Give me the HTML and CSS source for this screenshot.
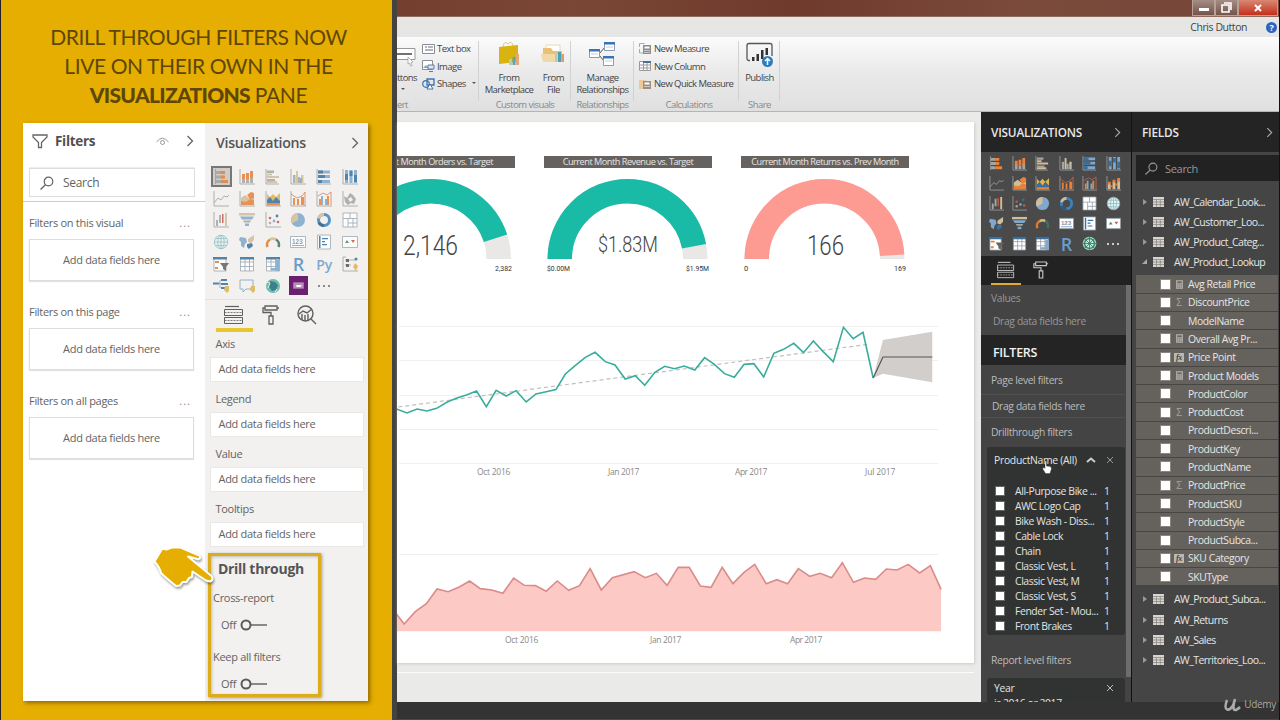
FILE: index.html
```html
<!DOCTYPE html>
<html>
	<head>
		<meta charset="UTF-8">
		<title>Drill through filters</title>
		<link rel="stylesheet" href="styles.css">
	</head>
	<body>
		<!-- icons -->
		<svg class="defs" width="0" height="0">
			<symbol id="i-barh" viewBox="0 0 16 16"><path class="ax" d="M1.5 0v15"/><path class="g" d="M2 2h5v3H2zM2 6.500h8v3H2zM2 11h5v3H2z"/><path class="o" d="M6 2h5v3H6zM7 6.500h4v3H7zM7 11h7v3H7z"/></symbol>
			<symbol id="i-barv" viewBox="0 0 16 16"><path class="ax" d="M1 0v15h15"/><path class="g" d="M3 9h3v5H3zM7 10h3v4H7zM11 8h3v6h-3z"/><path class="o" d="M3 5h3v5H3zM7 4h3v6H7zM11 2h3v7h-3z"/></symbol>
			<symbol id="i-clh" viewBox="0 0 16 16"><path class="ax" d="M1 0v15h13"/><path class="g" d="M2 1.500h7v2.500H2zM2 10h8v2H2z"/><path class="t" d="M2 4.500h5v2H2zM2 7h12v2H2zM2 12h10v2H2z"/></symbol>
			<symbol id="i-clv" viewBox="0 0 16 16"><path class="ax" d="M1 0v15h15"/><path class="g" d="M3 6h2.500v8H3zM8 8h2v6H8z"/><path class="t" d="M6 2h2v12H6zM11 6h2.500v8H11z"/><path class="b" d="M10 9h2v5h-2z"/></symbol>
			<symbol id="i-fh" viewBox="0 0 16 16"><path class="ax" d="M1 0v15h14"/><path class="b" d="M2 1.500h12v3H2zM2 6h12v3H2zM2 11h12v3H2z"/><path class="n" d="M2 1.500h5v3H2zM2 6h7v3H2zM2 11h4v3H2z"/></symbol>
			<symbol id="i-fv" viewBox="0 0 16 16"><path class="ax" d="M1 0v15h15"/><path class="b" d="M3 1h3v13H3zM7.500 1h3v13h-3zM12 1h3v13h-3z"/><path class="n" d="M3 5h3v6H3zM7.500 2h3v5h-3zM12 6h3v7h-3z"/></symbol>
			<symbol id="i-line" viewBox="0 0 16 16"><path class="ax" d="M1 0v15h15M1 12l4-5 3 2 3-4 3 1 2-2"/></symbol>
			<symbol id="i-area" viewBox="0 0 16 16"><path class="ax" d="M1 0v15h15"/><path class="t" d="M2 7l4-3 4 3 5-3v10H2z"/><path class="o" d="M2 10l5 1 4-3 4 1v5H2zM8 4l4-3 3 1v5l-4 1z"/></symbol>
			<symbol id="i-stack" viewBox="0 0 16 16"><path class="ax" d="M1 0v15h15"/><path class="y" d="M2 3l3 3 3-3 3 3 4-4v10H2z"/><path class="n" d="M2 9l3-3 3 4 3-4 4 4v3H2z"/><path class="o" d="M2 12h13v2.500H2z"/></symbol>
			<symbol id="i-lc" viewBox="0 0 16 16"><path class="ax" d="M1 0v15h15"/><path class="o" d="M3 7h2v7H3zM7 8h2v6H7zM11 6h3v8h-3z"/><path class="lr" d="M1 3l6 4 5-2 3-4v14"/></symbol>
			<symbol id="i-lc2" viewBox="0 0 16 16"><path class="ax" d="M1 0v15h15"/><path class="o" d="M3 8h2v6H3zM11 5h2v9h-2z"/><path class="b" d="M5 5h2v9H5zM9 8h2v6H9z"/><path class="lr" d="M2 5l5-3 4 2 4-3v13"/></symbol>
			<symbol id="i-rib" viewBox="0 0 16 16"><path class="ax" d="M1 0v15h15"/><path class="g" d="M2 5l3 2 3-5 3 2 3 4-2 5-3-1-3 2-3-3z"/><path class="bg" d="M6 8l3-2 2 3-3 2z"/></symbol>
			<symbol id="i-cols" viewBox="0 0 16 16"><path class="ax" d="M1 0v15h15"/><path class="t" d="M2 8h3v6H2zM7 6h3v8H7zM12 4h3v10h-3z"/><path class="o" d="M2 6h3v3H2zM7 4h3v3H7zM12 2h3v4h-3zM5 10h2v2H5zM10 8h2v2h-2z"/></symbol>
			<symbol id="i-wf" viewBox="0 0 16 16"><path class="ax" d="M1 0v15h15"/><path class="g" d="M3 8h2v6H3zM6 3h2v8H6z"/><path class="r" d="M9 2h1.500v9H9z"/><path class="t" d="M12 1h2v13h-2z"/></symbol>
			<symbol id="i-fun" viewBox="0 0 16 16"><path class="t" d="M0 1h16v2.500H0z"/><path class="b" d="M1 4.500h14l-2 3H3z"/><path class="g" d="M4 8.500h8l-1 2H5z"/><path class="b" d="M6 11.500h4V14H6z"/></symbol>
			<symbol id="i-sc" viewBox="0 0 16 16"><path class="ax" d="M1 0v15h15"/><circle class="r" cx="5" cy="6" r="1.300"/><circle class="b" cx="9" cy="9" r="1.400"/><circle class="n" cx="12" cy="4" r="1.400"/><circle class="r" cx="13" cy="10" r="1.300"/><circle class="g" cx="5" cy="11" r="1.300"/></symbol>
			<symbol id="i-pie" viewBox="0 0 16 16"><circle class="b" cx="8" cy="8" r="7"/><path class="t" d="M8 8V1a7 7 0 0 0-6 10.500z"/></symbol>
			<symbol id="i-don" viewBox="0 0 16 16"><circle cx="8" cy="8" r="5.500" fill="none" stroke="#3b83bd" stroke-width="3"/><path d="M8 2.500a5.500 5.500 0 0 0-5.300 4" fill="none" stroke="#d3bd93" stroke-width="3"/><path d="M3 10.500A5.500 5.500 0 0 0 8 13.500" fill="none" stroke="#255b86" stroke-width="3"/></symbol>
			<symbol id="i-tree" viewBox="0 0 16 16"><path class="box" d="M1 1h14v14H1zM1 6.500h14M8 1v5.500M6 6.500V15M11 6.500V15M6 11h9"/></symbol>
			<symbol id="i-glb" viewBox="0 0 16 16"><circle class="gl" cx="8" cy="8" r="6.700"/><path class="gll" d="M1.500 8h13M8 1.500v13M2.500 4.500h11M2.500 11.500h11"/><ellipse class="gll" cx="8" cy="8" rx="3.200" ry="6.700"/></symbol>
			<symbol id="i-map" viewBox="0 0 16 16"><path class="b" d="M1 3l6 1 1 4-2 2-1 4-3-2V8L0 6z"/><path class="t" d="M9 5l6-4v5l-3 3-3-1z"/><path class="n" d="M8 10l5-1 1 3-4 3-2-2z"/></symbol>
			<symbol id="i-gau" viewBox="0 0 16 16"><path d="M2.500 13A6 6 0 0 1 5 5.500" stroke="#e07b2c" stroke-width="2.600" fill="none"/><path d="M5 5.500a6 6 0 0 1 6 0" stroke="#d8bd82" stroke-width="2.600" fill="none"/><path d="M11 5.500a6 6 0 0 1 2.500 7.500" stroke="#41725f" stroke-width="2.600" fill="none"/></symbol>
			<symbol id="i-card" viewBox="0 0 16 16"><path class="box" d="M.5 2.500h15v11H.500z"/><text class="tn" x="2" y="9.500">123</text><path class="b" d="M2 11h12v1H2z"/></symbol>
			<symbol id="i-mc" viewBox="0 0 16 16"><path class="box" d="M1.500 1h13v14h-13z"/><path class="n" d="M3 2h1.500v12H3zM6 4h6v1.200H6zM6 7h3v1.200H6zM6 10h5v1.200H6z"/></symbol>
			<symbol id="i-kpi" viewBox="0 0 16 16"><path class="box" d="M.5 2.500h15v11H.500z"/><path class="gr" d="M3 9l2-3 2 3z"/><path class="r" d="M9 6h4l-2 3z"/></symbol>
			<symbol id="i-sli" viewBox="0 0 16 16"><path class="box" d="M1 2h12v13H1z"/><path class="n" d="M0 1h14v2.500H0z"/><path class="o" d="M2 5h4v2H2zM2 11h3v2H2z"/><path class="fn" d="M7 7h9l-3 4v4l-3-2v-2z"/></symbol>
			<symbol id="i-tab" viewBox="0 0 16 16"><path class="box" d="M1.500 2h13v13h-13zM1.500 6h13M1.500 10.500h13M6 3v12M10.500 3v12"/><path class="n" d="M1 1h14v2.500H1z"/></symbol>
			<symbol id="i-mat" viewBox="0 0 16 16"><path class="box" d="M1.500 2h13v13h-13zM1.500 6h13M1.500 10.500h13M6 3v12M10.500 3v12"/><path class="n" d="M1 1h14v2.500H1z"/><path class="b" d="M11 4h3.500v11H11zM6 12h8v2.500H6z"/></symbol>
			<symbol id="i-inf" viewBox="0 0 16 16"><path class="ax" d="M1 1v14h15M3 4h10M3 9h6M1 1h3"/><path class="k" d="M4 3h3v3H4zM4 8h3v3H4z"/><circle class="n" cx="14" cy="3" r="1.500"/><path class="y" d="M13 7l3 3-2 5-3-4z"/></symbol>
			<symbol id="i-dec" viewBox="0 0 16 16"><path class="n" d="M0 4.500h6v2H0zM8 1h6v2H8zM8 5h7v2H8zM8 9h4v2H8z"/><path class="ax" d="M6 5.500h2M7 2v8"/><path class="y" d="M12 8h4v5l-2 2-3-3z"/></symbol>
			<symbol id="i-qa" viewBox="0 0 16 16"><path d="M1 2h13v9H7l-3 3v-3H1z" fill="#f4f3f1" stroke="#86a6c0"/><path class="y" d="M12 8h4v5l-2 2-3-3z"/></symbol>
			<symbol id="i-arc" viewBox="0 0 16 16"><circle cx="8" cy="8" r="7" fill="#54b5a1"/><path d="M5 3l5 1 3 3-2 5-4 1-3-4z" fill="#1f6c7c"/><path d="M2 4l3 1-2 5M12 11l-2 3" stroke="#e8f2c9" fill="none"/></symbol>
			<symbol id="i-net" viewBox="0 0 16 16"><circle cx="8" cy="8" r="7.300" fill="#9ccdb8"/><circle cx="8" cy="8" r="5.200" fill="#cfe4d6" stroke="#1d7a68" stroke-width="1.200"/><path d="M1 8h14M8 1v14M3 3l10 10M13 3L3 13" stroke="#2b8271" stroke-width=".9" fill="none"/></symbol>
			<symbol id="i-pa" viewBox="0 0 18 18"><path d="M0 0h18v18H0z" fill="#6b1f6f"/><path d="M4 6h10v6H4z" fill="#b98abb"/><path d="M7 8.500h5l-1 2H7z" fill="#fff"/></symbol>
			<symbol id="i-chev" viewBox="0 0 8 12"><path d="M1.500 1l5 5-5 5" fill="none" stroke="currentColor" stroke-width="1.300"/></symbol>
			<symbol id="i-mag" viewBox="0 0 14 14"><circle cx="8.500" cy="5.500" r="4.300" fill="none" stroke="currentColor" stroke-width="1.200"/><path d="M5.400 8.700L.500 13.500" stroke="currentColor" stroke-width="1.300"/></symbol>
			<symbol id="i-fields" viewBox="0 0 20 20"><g fill="none" stroke="currentColor"><path d="M1 1.500h14" stroke-width="1.200"/><path d="M.5 4.500h18v6H.500zM.500 12.500h18v6H.500z" stroke-width="1"/><path d="M.5 10.500h18M.500 7.500h18M.500 15.500h18" stroke-dasharray="2 1" stroke-width=".8"/></g></symbol>
			<symbol id="i-roll" viewBox="0 0 18 20"><path d="M3 1h12v4H3zM3 3H1v4.500h8V11M7 11h4v8H7zM15 3h2" fill="none" stroke="currentColor" stroke-width="1.300"/></symbol>
			<symbol id="i-tbl" viewBox="0 0 11 10"><path d="M0 0h11v10H0z" fill="#d8d5d0"/><path d="M0 2.500h11M0 5h11M0 7.500h11M3.500 2.500V10M7.300 2.500V10" stroke="#77746f" stroke-width=".6"/></symbol>
			<symbol id="i-calc" viewBox="0 0 8 10"><path d="M0 0h8v10H0z" fill="#aaa7a2"/><path d="M1.500 1.500h5v2h-5z" fill="#67645f"/><path d="M1.500 5.500h5M1.500 8h5" stroke="#67645f" stroke-dasharray="1 1"/></symbol>
		</svg>

		<div class="screen">
			<!-- left slide -->
			<div class="slide">
				<h1>DRILL THROUGH FILTERS NOW<br>LIVE ON THEIR OWN IN THE<br><b>VISUALIZATIONS</b> PANE</h1>
				<div class="shot">
					<div class="filters">
						<div class="f-head">
							<svg width="16" height="15" viewBox="0 0 16 15"><path d="M1 1h14v2L9.500 8.500V13.500h-3v-5L1 3z" fill="none" stroke="#666" stroke-width="1.300"/></svg>
							<b>Filters</b>
							<svg class="eye" width="13" height="9" viewBox="0 0 13 9"><path d="M.5 5Q6.500-2.500 12.500 5" fill="none" stroke="#999"/><circle cx="6.500" cy="5.500" r="2" fill="none" stroke="#999"/></svg>
							<svg class="chev" width="8" height="12"><use href="#i-chev"/></svg>
						</div>
						<div class="f-search"><svg width="14" height="14"><use href="#i-mag"/></svg>Search</div>
						<div class="f-sec"><p>Filters on this visual<i>...</i></p><div>Add data fields here</div></div>
						<div class="f-sec"><p>Filters on this page<i>...</i></p><div>Add data fields here</div></div>
						<div class="f-sec"><p>Filters on all pages<i>...</i></p><div>Add data fields here</div></div>
					</div>
					<div class="viz light">
						<div class="v-head"><b>Visualizations</b><svg width="8" height="12"><use href="#i-chev"/></svg></div>
						<div class="icons">
							<span class="on"><svg><use href="#i-barh"/></svg></span>
							<span><svg><use href="#i-barv"/></svg></span>
							<span><svg><use href="#i-clh"/></svg></span>
							<span><svg><use href="#i-clv"/></svg></span>
							<span><svg><use href="#i-fh"/></svg></span>
							<span><svg><use href="#i-fv"/></svg></span>
							<span><svg><use href="#i-line"/></svg></span>
							<span><svg><use href="#i-area"/></svg></span>
							<span><svg><use href="#i-stack"/></svg></span>
							<span><svg><use href="#i-lc"/></svg></span>
							<span><svg><use href="#i-lc2"/></svg></span>
							<span><svg><use href="#i-rib"/></svg></span>
							<span><svg><use href="#i-wf"/></svg></span>
							<span><svg><use href="#i-fun"/></svg></span>
							<span><svg><use href="#i-sc"/></svg></span>
							<span><svg><use href="#i-pie"/></svg></span>
							<span><svg><use href="#i-don"/></svg></span>
							<span><svg><use href="#i-tree"/></svg></span>
							<span><svg><use href="#i-glb"/></svg></span>
							<span><svg><use href="#i-map"/></svg></span>
							<span><svg><use href="#i-gau"/></svg></span>
							<span><svg><use href="#i-card"/></svg></span>
							<span><svg><use href="#i-mc"/></svg></span>
							<span><svg><use href="#i-kpi"/></svg></span>
							<span><svg><use href="#i-sli"/></svg></span>
							<span><svg><use href="#i-tab"/></svg></span>
							<span><svg><use href="#i-mat"/></svg></span>
							<span class="rr">R</span>
							<span class="py">Py</span>
							<span><svg><use href="#i-inf"/></svg></span>
							<span><svg><use href="#i-dec"/></svg></span>
							<span><svg><use href="#i-qa"/></svg></span>
							<span><svg><use href="#i-arc"/></svg></span>
							<span><svg class="big"><use href="#i-pa"/></svg></span>
							<span class="dots"><i></i><i></i><i></i></span>
						</div>
						<div class="tabs">
							<span class="on"><svg width="20" height="20"><use href="#i-fields"/></svg></span>
							<span><svg width="18" height="20"><use href="#i-roll"/></svg></span>
							<span><svg width="20" height="20" viewBox="0 0 20 20"><g fill="none" stroke="currentColor" stroke-width="1.400"><circle cx="8.500" cy="8.500" r="7.500"/><path d="M14 14l5 5M2 9l4-3 4 2 5-4M5 15V9M8 15.500V10M11 15V9"/></g></svg></span>
						</div>
						<div class="well"><p>Axis</p><div>Add data fields here</div></div>
						<div class="well"><p>Legend</p><div>Add data fields here</div></div>
						<div class="well"><p>Value</p><div>Add data fields here</div></div>
						<div class="well"><p>Tooltips</p><div>Add data fields here</div></div>
						<div class="drill">
							<b>Drill through</b>
							<p>Cross-report</p>
							<div class="sw">Off<svg width="28" height="12" viewBox="0 0 28 12"><path d="M10 6h17" stroke="#666" stroke-width="1.500"/><circle cx="6" cy="6" r="4.500" fill="#f2f1ef" stroke="#5a5a5a" stroke-width="2"/></svg></div>
							<p>Keep all filters</p>
							<div class="sw">Off<svg width="28" height="12" viewBox="0 0 28 12"><path d="M10 6h17" stroke="#666" stroke-width="1.500"/><circle cx="6" cy="6" r="4.500" fill="#f2f1ef" stroke="#5a5a5a" stroke-width="2"/></svg></div>
						</div>
					</div>
					<svg class="hand" width="64" height="46" viewBox="0 0 64 46"><path d="M2.500 17.500L10.300 4.500l4 1L20 3.500l8.500 0 18.800 8q2 3-1 3.800L36 12.500l23.500 19.500q2.500 4-1.500 5.500l-4-1-13.500-9-.5 5.500-3 1-2.500 4-4 0-2.500 3.500-4 .5Q14 34 9 29q-1-5-6.500-11.500z" fill="#e5ae00" stroke="#fff" stroke-width="2" stroke-linejoin="round"/></svg>
				</div>
			</div>

			<!-- power bi window -->
			<div class="app">
				<div class="titlebar">
					<div class="winbtns">
						<span><i class="min"></i></span>
						<span><svg width="11" height="11" viewBox="0 0 11 11"><path d="M3 1h7v7M1 3h7v7H1z" fill="none" stroke="#fff" stroke-width="1.600"/></svg></span>
						<span class="close"><svg width="8" height="8" viewBox="0 0 8 8"><path d="M1 1l6 6M7 1L1 7" stroke="#fff" stroke-width="2"/></svg></span>
					</div>
				</div>
				<div class="userbar">Chris Dutton<span>?</span></div>
				<div class="ribbon">
					<div class="grp g1">
						<div class="row">
							<div class="bigbtn">
								<svg width="20" height="28" viewBox="0 0 20 28"><path d="M-4 8.500h22v11H-4z" fill="#fff" stroke="#999"/><path d="M0 14h15" stroke="#444" stroke-width="1.500"/><path d="M11 17l5 5-2 .500 1 3-1.500.500-1-3-1.500 1z" fill="#fff" stroke="#999" stroke-width=".7"/></svg>
								<p>ttons</p><i class="dd"></i>
							</div>
							<ul>
								<li><svg width="13" height="12" viewBox="0 0 13 12"><path d="M.5 1.500h12v9H.500z" fill="#fff" stroke="#8a8f96"/><path d="M3 4h2M6 4h5M3 7h8" stroke="#668"/></svg>Text box</li>
								<li><svg width="13" height="12" viewBox="0 0 13 12"><path d="M.5.500h10v9H.500z" fill="#fff" stroke="#8a8f96"/><path d="M1 8l3-3 3 3z" fill="#8aa5c2"/><path d="M6 5h6v4H6zM7 11.500h4" fill="#dfe7f0" stroke="#5a7da5"/></svg>Image</li>
								<li><svg width="13" height="12" viewBox="0 0 13 12"><path d="M5 1h7v6H5z" fill="none" stroke="#3c74b0" stroke-width="1.300"/><circle cx="4" cy="6" r="3.300" fill="none" stroke="#3c74b0" stroke-width="1.200"/><path d="M5 11l3-5 3 5z" fill="#fff" stroke="#3c74b0"/></svg>Shapes<i class="dd"></i></li>
							</ul>
						</div>
						<div class="lab">ert</div>
					</div>
					<div class="grp g2">
						<div class="row">
							<div class="bigbtn">
								<svg width="24" height="28" viewBox="0 0 24 28"><path d="M6 7q1-7 5-3 4-4 5 2" fill="none" stroke="#d8c98c"/><path d="M2 7l19-2v17L2 24z" fill="#d9b310"/><path d="M12 19h3v6h-3z" fill="#b8cbb7"/><path d="M15.500 17h3v8h-3z" fill="#5fa6b5"/><path d="M19 14h3v11h-3z" fill="#e6a77b"/></svg>
								<p>From<br>Marketplace</p>
							</div>
							<div class="bigbtn">
								<svg width="24" height="28" viewBox="0 0 24 28"><path d="M5 5h14v8H5z" fill="#fff" stroke="#ecd9a9"/><path d="M2 8h8l2 3h9v11H2z" fill="#e9c07a"/><path d="M0 14h18v8H2z" fill="#f2d8a4"/><path d="M14 14h2.500v8H14z" fill="#b8cbb7"/><path d="M17 12h3v10h-3z" fill="#4f9fb5"/><path d="M20.500 14H23v8h-2.500z" fill="#e09a6a"/></svg>
								<p>From<br>File</p>
							</div>
						</div>
						<div class="lab">Custom visuals</div>
					</div>
					<div class="grp g3">
						<div class="row">
							<div class="bigbtn">
								<svg width="27" height="28" viewBox="0 0 27 28"><path d="M10 14l6-7M10 15l5 6" stroke="#555"/><g fill="#fff" stroke="#8c9db0"><path d="M.5 9.500h10v8H.500zM15.500 2.500h10v8h-10zM14.500 16.500h10v9h-10z"/></g><path d="M0 9h11v2.500H0zM15 2h11v2.500H15zM14 16h11v2.500H14z" fill="#3b73b4"/><path d="M2 14h7M17 7h7M16 21h7" stroke="#c3cedb"/></svg>
								<p>Manage<br>Relationships</p>
							</div>
						</div>
						<div class="lab">Relationships</div>
					</div>
					<div class="grp g4">
						<ul>
							<li><svg width="13" height="12" viewBox="0 0 13 12"><path d="M.5 4V.500h5M.500 6v4h4" fill="none" stroke="#aaa"/><path d="M4 2h8v9H4z" fill="#8d8d8d"/><path d="M5.500 3.500h5v2h-5z" fill="#fff"/><path d="M5.500 7.500h5M5.500 9.500h5" stroke="#fff" stroke-dasharray="1 1"/></svg>New Measure</li>
							<li><svg width="13" height="12" viewBox="0 0 13 12"><path d="M.5 1.500h11v9H.500zM4.500 2v9M8 2v9M0 5h12M0 8h12" fill="#fff" stroke="#999"/><path d="M4 1h8v2H4z" fill="#4d6f96"/></svg>New Column</li>
							<li><svg width="13" height="12" viewBox="0 0 13 12"><path d="M0 2h7v9H0z" fill="#e9c99d"/><path d="M4 3h8v8H4z" fill="#a08f80"/><path d="M5.500 4.500h5v2h-5z" fill="#fff"/><path d="M5.500 8.500h5" stroke="#fff" stroke-dasharray="1 1"/></svg>New Quick Measure</li>
						</ul>
						<div class="lab">Calculations</div>
					</div>
					<div class="grp g5">
						<div class="row">
							<div class="bigbtn">
								<svg width="28" height="28" viewBox="0 0 28 28"><path d="M4 20.500H3q-2 0-2-2v-13q0-2 2-2h21q2 0 2 2V16" fill="none" stroke="#555" stroke-width="1.300"/><path d="M6 17h2.500v4H6zM10.500 14H13v7h-2.500zM15 10h2.500v9H15zM19.500 8H22v7h-2.500z" fill="#333"/><circle cx="21.500" cy="21.500" r="5.500" fill="#2c7dc0"/><path d="M21.500 25v-6M19 21l2.500-2.500L24 21" fill="none" stroke="#fff" stroke-width="1.500"/></svg>
								<p>Publish</p>
							</div>
						</div>
						<div class="lab">Share</div>
					</div>
				</div>

				<div class="main">
					<div class="report">
						<div class="page">
							<div class="gauges">
								<div class="gauge">
									<p>Current Month Orders vs. Target</p>
									<svg width="168" height="110" viewBox="0 0 168 110">
										<path class="track" d="M16.250 91a67.750 67.750 0 0 1 135.500 0"/>
										<path class="val" pathLength="100" stroke-dasharray="90.100 200" d="M16.250 91a67.750 67.750 0 0 1 135.500 0"/>
										<text class="num" x="56" y="87" font-size="27" textLength="55" lengthAdjust="spacingAndGlyphs">2,146</text>
										<text class="lim" x="148" y="103" textLength="17" lengthAdjust="spacingAndGlyphs">2,382</text>
									</svg>
								</div>
								<div class="gauge">
									<p>Current Month Revenue vs. Target</p>
									<svg width="168" height="110" viewBox="0 0 168 110">
										<path class="track" d="M15.750 91a67.750 67.750 0 0 1 135.500 0"/>
										<path class="val" pathLength="100" stroke-dasharray="94 200" d="M15.750 91a67.750 67.750 0 0 1 135.500 0"/>
										<text class="num" x="54" y="84" font-size="22" textLength="60" lengthAdjust="spacingAndGlyphs">$1.83M</text>
										<text class="lim" x="3" y="103" textLength="23" lengthAdjust="spacingAndGlyphs">$0.00M</text>
										<text class="lim" x="142" y="103" textLength="23" lengthAdjust="spacingAndGlyphs">$1.95M</text>
									</svg>
								</div>
								<div class="gauge red">
									<p>Current Month Returns vs. Prev Month</p>
									<svg width="168" height="110" viewBox="0 0 168 110">
										<path class="track" d="M15.750 91a67.750 67.750 0 0 1 135.500 0"/>
										<path class="val" pathLength="100" stroke-dasharray="98.200 200" d="M15.750 91a67.750 67.750 0 0 1 135.500 0"/>
										<text class="num" x="66" y="87" font-size="27" textLength="37" lengthAdjust="spacingAndGlyphs">166</text>
										<text class="lim" x="3" y="103">0</text>
										<text class="lim" x="153" y="103" textLength="12" lengthAdjust="spacingAndGlyphs">169</text>
									</svg>
								</div>
							</div>
							<svg class="linechart" width="577" height="190" viewBox="397 300 577 190">
								<path class="grid" d="M399 326.500h539M399 360.500h539M399 395.500h539M399 429.500h539M399 463.500h539"/>
								<g transform="translate(390 300) scale(.3763 .3333)">
									<path d="M1284 234L1310 120 1441 95V247L1310 221z" fill="#d2cecb"/>
									<path class="trend" d="M22 321L1270 133"/>
									<path class="teal" d="M10 322L19 328 45 339 72 327 98 333 124 325 152 306 178 294 203 285 230 273 256 320 282 271 309 288 335 272 362 306 388 282 415 275 441 269 466 222 492 197 519 172 545 157 572 185 598 195 625 237 652 227 677 256 704 217 730 199 756 206 782 198 810 210 836 173 862 193 889 221 915 232 941 193 967 191 993 231 1020 160 1046 148 1073 130 1099 158 1125 123 1151 155 1178 185 1205 82 1231 116 1257 97 1284 234"/>
									<path class="fore" d="M1284 234L1310 171H1441"/>
								</g>
								<text x="477" y="475" textLength="33">Oct 2016</text>
								<text x="608" y="475" textLength="31">Jan 2017</text>
								<text x="735" y="475" textLength="32">Apr 2017</text>
								<text x="865" y="475" textLength="30">Jul 2017</text>
							</svg>
							<svg class="areachart" width="577" height="132" viewBox="397 530 577 132">
								<path class="grid" d="M399 554.500h539"/>
								<g transform="translate(390 530) scale(.3827 .3333)">
									<path fill="#fdc9c4" d="M10 304V242L19 255 37 282 66 245 95 221 123 177 152 185 181 171 208 153 236 176 266 180 295 190 323 144 351 166 380 167 408 184 437 153 467 181 495 167 523 116 552 180 581 143 638 125 667 143 696 130 724 166 753 112 782 112 811 168 839 172 868 112 896 161 925 127 953 103 983 161 1011 149 1039 161 1067 116 1097 139 1124 130 1154 143 1182 98 1211 157 1240 144 1269 148 1297 117 1325 120 1354 103 1384 129 1412 107 1440 178V304z"/>
									<path class="pink" d="M10 242L19 255 37 282 66 245 95 221 123 177 152 185 181 171 208 153 236 176 266 180 295 190 323 144 351 166 380 167 408 184 437 153 467 181 495 167 523 116 552 180 581 143 638 125 667 143 696 130 724 166 753 112 782 112 811 168 839 172 868 112 896 161 925 127 953 103 983 161 1011 149 1039 161 1067 116 1097 139 1124 130 1154 143 1182 98 1211 157 1240 144 1269 148 1297 117 1325 120 1354 103 1384 129 1412 107 1440 178"/>
								</g>
								<text x="505" y="643" textLength="33">Oct 2016</text>
								<text x="650" y="643" textLength="31">Jan 2017</text>
								<text x="790" y="643" textLength="32">Apr 2017</text>
							</svg>
						</div>
					</div>

					<div class="vpane dark">
						<div class="p-head">VISUALIZATIONS<svg width="7" height="11"><use href="#i-chev"/></svg></div>
						<div class="icons">
							<span><svg><use href="#i-barh"/></svg></span>
							<span><svg><use href="#i-barv"/></svg></span>
							<span><svg><use href="#i-clh"/></svg></span>
							<span><svg><use href="#i-clv"/></svg></span>
							<span><svg><use href="#i-fh"/></svg></span>
							<span><svg><use href="#i-fv"/></svg></span>
							<span><svg><use href="#i-line"/></svg></span>
							<span><svg><use href="#i-area"/></svg></span>
							<span><svg><use href="#i-stack"/></svg></span>
							<span><svg><use href="#i-lc"/></svg></span>
							<span><svg><use href="#i-lc2"/></svg></span>
							<span><svg><use href="#i-cols"/></svg></span>
							<span><svg><use href="#i-wf"/></svg></span>
							<span><svg><use href="#i-sc"/></svg></span>
							<span><svg><use href="#i-pie"/></svg></span>
							<span><svg><use href="#i-don"/></svg></span>
							<span><svg><use href="#i-tree"/></svg></span>
							<span><svg><use href="#i-glb"/></svg></span>
							<span><svg><use href="#i-map"/></svg></span>
							<span><svg><use href="#i-fun"/></svg></span>
							<span><svg><use href="#i-gau"/></svg></span>
							<span><svg><use href="#i-card"/></svg></span>
							<span><svg><use href="#i-mc"/></svg></span>
							<span><svg><use href="#i-kpi"/></svg></span>
							<span><svg><use href="#i-sli"/></svg></span>
							<span><svg><use href="#i-tab"/></svg></span>
							<span><svg><use href="#i-mat"/></svg></span>
							<span class="rr">R</span>
							<span><svg><use href="#i-net"/></svg></span>
							<span class="dots"><i></i><i></i><i></i></span>
						</div>
						<div class="tabs">
							<span class="on"><svg width="18" height="18"><use href="#i-fields"/></svg></span>
							<span><svg width="16" height="18"><use href="#i-roll"/></svg></span>
						</div>
						<div class="scroll">
							<div class="inner">
								<p class="dim">Values</p>
								<p class="drop dim">Drag data fields here</p>
								<div class="sub">FILTERS</div>
								<p class="pl">Page level filters</p>
								<p class="drop dr2">Drag data fields here</p>
								<p class="dl">Drillthrough filters</p>
								<div class="card">
									<div class="c-head">ProductName (All)
										<svg width="10" height="6" viewBox="0 0 10 6"><path d="M1 5l4-3.500L9 5" fill="none" stroke="#ccc" stroke-width="2"/></svg>
										<svg class="x" width="8" height="8" viewBox="0 0 8 8"><path d="M1 1l6 6M7 1L1 7" stroke="#999"/></svg>
									</div>
									<ul>
										<li><i></i><span>All-Purpose Bike ...</span>1</li>
										<li><i></i><span>AWC Logo Cap</span>1</li>
										<li><i></i><span>Bike Wash - Diss...</span>1</li>
										<li><i></i><span>Cable Lock</span>1</li>
										<li><i></i><span>Chain</span>1</li>
										<li><i></i><span>Classic Vest, L</span>1</li>
										<li><i></i><span>Classic Vest, M</span>1</li>
										<li><i></i><span>Classic Vest, S</span>1</li>
										<li><i></i><span>Fender Set - Mou...</span>1</li>
										<li><i></i><span>Front Brakes</span>1</li>
									</ul>
									<svg class="cursor" width="10" height="14" viewBox="0 0 10 14"><path d="M3 1h1.500v5l4 .5 1 2-1.500 5H3.500L.500 8.500 2 7.500l1 1z" fill="#fff" stroke="#333" stroke-width=".4"/></svg>
								</div>
								<p class="rl">Report level filters</p>
								<div class="card yr">
									<div class="c-head">Year<svg class="x" width="8" height="8" viewBox="0 0 8 8"><path d="M1 1l6 6M7 1L1 7" stroke="#bbb"/></svg></div>
									<p>is 2016 or 2017</p>
								</div>
							</div>
							<div class="bar"></div>
						</div>
					</div>

					<div class="fields">
						<div class="p-head">FIELDS<svg width="7" height="11"><use href="#i-chev"/></svg></div>
						<div class="search"><svg width="13" height="13"><use href="#i-mag"/></svg>Search</div>
						<ul class="tables">
							<li><i></i><svg width="11" height="10"><use href="#i-tbl"/></svg>AW_Calendar_Look...</li>
							<li><i></i><svg width="11" height="10"><use href="#i-tbl"/></svg>AW_Customer_Loo...</li>
							<li><i></i><svg width="11" height="10"><use href="#i-tbl"/></svg>AW_Product_Categ...</li>
							<li class="open"><i></i><svg width="11" height="10"><use href="#i-tbl"/></svg>AW_Product_Lookup</li>
						</ul>
						<ul class="cols">
							<li><i></i><em><svg width="7" height="9"><use href="#i-calc"/></svg></em>Avg Retail Price</li>
							<li><i></i><em>Σ</em>DiscountPrice</li>
							<li><i></i><em></em>ModelName</li>
							<li><i></i><em><svg width="7" height="9"><use href="#i-calc"/></svg></em>Overall Avg Pr...</li>
							<li><i></i><em class="fx">fx</em>Price Point</li>
							<li><i></i><em><svg width="7" height="9"><use href="#i-calc"/></svg></em>Product Models</li>
							<li><i></i><em></em>ProductColor</li>
							<li><i></i><em>Σ</em>ProductCost</li>
							<li><i></i><em></em>ProductDescri...</li>
							<li><i></i><em></em>ProductKey</li>
							<li><i></i><em></em>ProductName</li>
							<li><i></i><em>Σ</em>ProductPrice</li>
							<li><i></i><em></em>ProductSKU</li>
							<li><i></i><em></em>ProductStyle</li>
							<li><i></i><em></em>ProductSubca...</li>
							<li><i></i><em class="fx">fx</em>SKU Category</li>
							<li><i></i><em></em>SKUType</li>
						</ul>
						<ul class="tables last">
							<li><i></i><svg width="11" height="10"><use href="#i-tbl"/></svg>AW_Product_Subca...</li>
							<li><i></i><svg width="11" height="10"><use href="#i-tbl"/></svg>AW_Returns</li>
							<li><i></i><svg width="11" height="10"><use href="#i-tbl"/></svg>AW_Sales</li>
							<li><i></i><svg width="11" height="10"><use href="#i-tbl"/></svg>AW_Territories_Loo...</li>
						</ul>
					</div>
				</div>
				<div class="foot"></div>
				<div class="udemy"><svg width="18" height="15" viewBox="0 0 18 15"><path d="M4 3q-3 8 0 9.500 3 1 6-4L12 2q-3 11 0 11 2 0 5-3" fill="none" stroke="#aaa" stroke-width="2.500"/></svg>Udemy</div>
			</div>
		</div>
	</body>
</html>
```

FILE: styles.css
```css
*{
	box-sizing: border-box;
}
body{
	margin: 0;
	font-family: "Open Sans", "Noto Sans", sans-serif;
	font-size: 11px;
	letter-spacing: -.3px;
}
p, ul, h1{
	margin: 0;
	padding: 0;
	list-style: none;
}
i, em{
	font-style: normal;
}
svg{
	flex: none;
	display: block;
}
.defs{
	position: absolute;
}
.screen{
	display: flex;
	width: 1280px;
	height: 720px;
	overflow: hidden;
	background: #111;
}

/* icon colours */
.ax{ fill: none; stroke: currentColor; stroke-width: .9; }
.o{ fill: #e8813a; }
.g{ fill: #a3a6a2; }
.t{ fill: #d2bd97; }
.b{ fill: #7fa8cc; }
.n{ fill: #37709f; }
.y{ fill: #dfb350; }
.r{ fill: #c65a4c; }
.k{ fill: #555; }
.gr{ fill: #4d8a5a; }
.bg{ fill: #f2f1ef; }
.lr{ fill: none; stroke: #d0694a; stroke-width: .8; }
.box{ fill: #fff; stroke: #8d9aa6; stroke-width: .8; }
.tn{ font: bold 6.500px "Liberation Sans", sans-serif; fill: #7894ad; letter-spacing: 0; }
.gl{ fill: #e4f2ef; stroke: #7eb3bb; stroke-width: .8; }
.gll{ fill: none; stroke: #7eb3bb; stroke-width: .7; }
.fn{ fill: #66625e; }
.dark .ax{ stroke: #7b7b7b; }
.dark .fn{ fill: #aaa; }
.light .icons svg{ opacity: .85; }
.light .icons .big{ opacity: 1; }

/* slide */
.slide{
	width: 397px;
	flex: none;
	background: #e5ae00;
	border-left: 1px solid #222;
	border-right: 5px solid #444341;
	padding: 22px 0 0 22px;
}
.slide h1{
	width: 351px;
	font: 400 21px/29px Lato, sans-serif;
	letter-spacing: -.4px;
	color: #5d4608;
	text-align: center;
	white-space: nowrap;
	height: 101px;
}
.slide h1 b{
	font-weight: 900;
	letter-spacing: -.7px;
}
.shot{
	position: relative;
	display: flex;
	width: 345px;
	height: 578px;
	background: #fff;
	color: #636363;
	box-shadow: 2px 2px 4px rgba(90,60,0,.6);
}
.filters{
	width: 182px;
}
.f-head{
	display: flex;
	align-items: center;
	height: 36px;
	padding: 0 11px 0 9px;
}
.f-head b{
	margin-left: 7px;
	font-size: 13.500px;
	color: #505050;
	flex: 1;
}
.f-head .eye{
	margin-right: 17px;
}
.f-search{
	display: flex;
	align-items: center;
	gap: 9px;
	height: 29px;
	margin: 9px 10px 4px 6px;
	padding-left: 10px;
	border: 1px solid #ddd;
	font-size: 12px;
	box-shadow: 0 -1px #eee;
}
.f-sec{
	height: 89.500px;
	padding: 12px 11px 0 6px;
}
.f-sec:nth-of-type(3){
	border-top: 1px solid #ccc;
}
.f-sec p{
	display: flex;
	justify-content: space-between;
	height: 25px;
	line-height: 18px;
	padding-right: 3px;
}
.f-sec i{
	letter-spacing: 1px;
	color: #888;
}
.f-sec div{
	height: 42px;
	line-height: 40px;
	border: 1px solid #ddd;
	box-shadow: 0 1px 1px #e3e3e3;
	text-align: center;
}
.viz{
	flex: 1;
	background: #f2f1ef;
}
.v-head{
	display: flex;
	align-items: center;
	justify-content: space-between;
	height: 43px;
	padding: 0 9px 4px 11px;
	font-size: 14.200px;
}
.v-head b{
	font-weight: 600;
	color: #555;
}
.icons{
	display: grid;
	grid-template-columns: repeat(6, 25.700px);
	grid-auto-rows: 21.800px;
	padding-left: 3.500px;
	color: #9a9a9a;
}
.icons span{
	display: flex;
	align-items: center;
	justify-content: center;
}
.icons svg{
	width: 16px;
	height: 16px;
}
.icons .big{
	width: 19px;
	height: 19px;
}
.icons .on{
	width: 21px;
	height: 21px;
	margin: 0 0 0 2.500px;
	border: 2px solid #777;
	background: #cfccc8;
}
.icons .rr{
	font-size: 18px;
	font-weight: 600;
	color: #6b9dcb;
}
.icons .py{
	font-size: 14px;
	font-weight: 600;
	color: #7fa9cf;
}
.dots{
	gap: 3px;
}
.dots i{
	width: 2px;
	height: 2px;
	background: #888;
}
.tabs{
	display: flex;
}
.light .tabs{
	height: 33px;
	margin-top: 2px;
	padding-left: 11px;
	border-top: 1px solid #e3e2e0;
	color: #5f5f5f;
}
.tabs span{
	display: flex;
	justify-content: center;
	width: 36.500px;
	padding-top: 5px;
}
.light .tabs .on{
	height: 32px;
	border-bottom: 4px solid #e9c52e;
}
.well{
	height: 55px;
	padding: 1px 4.500px 0 4.500px;
}
.well p{
	height: 24px;
	line-height: 22px;
	padding-left: 6px;
}
.well div{
	height: 25px;
	line-height: 22px;
	padding-left: 8px;
	background: #fff;
	border: 1px solid #e9e8e6;
}
.drill{
	width: 113px;
	height: 144px;
	margin: 1px 0 0 3px;
	border: 3px solid #ddac1a;
	padding: 1px 0 0 2px;
	box-shadow: 1px 1px 3px #999, inset 1px 1px 3px #bbb;
}
.drill b{
	display: block;
	height: 31px;
	padding-left: 5px;
	font-size: 14px;
	line-height: 23px;
	color: #555;
}
.drill p{
	line-height: 20px;
	height: 27px;
}
.drill .sw{
	display: flex;
	align-items: center;
	gap: 4px;
	height: 32px;
	padding: 0 0 12px 8px;
}
.drill .sw svg{
	margin-bottom: -1px;
}
.hand{
	position: absolute;
	left: 129px;
	top: 421px;
	filter: drop-shadow(1px 2px 1px rgba(0,0,0,.35));
}

/* window */
.app{
	position: relative;
	display: flex;
	flex-direction: column;
	width: 882px;
}
.titlebar{
	display: flex;
	justify-content: flex-end;
	height: 17px;
	padding-right: 1px;
	background: linear-gradient(90deg, #753f30, #7a4635 20%, #6f3a2c 45%, #7b4a3b 70%, #75473a);
	border-bottom: 1px solid #8f6b60;
}
.winbtns{
	display: flex;
	height: 16px;
	color: #fff;
}
.winbtns span{
	display: flex;
	align-items: center;
	justify-content: center;
	width: 23px;
	border: 1px solid #b99f96;
	border-top: 0;
	background: linear-gradient(#a58d84, #74534a);
}
.winbtns .close{
	width: 40px;
	background: linear-gradient(#d98874, #c3301a);
}
.min{
	width: 10px;
	height: 3px;
	margin-top: 4px;
	background: #fff;
}
.userbar{
	display: flex;
	align-items: center;
	justify-content: flex-end;
	gap: 19px;
	height: 20px;
	padding-right: 2px;
	background: #e6e6e4;
	color: #444;
	font-size: 10.500px;
	letter-spacing: -.45px;
}
.userbar span{
	width: 11px;
	height: 11px;
	border-radius: 50%;
	background: #2f64c2;
	color: #fff;
	font-size: 9px;
	line-height: 11px;
	font-weight: bold;
	text-align: center;
}
.ribbon{
	display: flex;
	height: 75px;
	background: linear-gradient(#fbfbfb, #e9e9e9 50%, #e0e0e0);
	border-bottom: 1px solid #b5b5b5;
	color: #444;
	font-size: 9.500px;
	letter-spacing: -.55px;
	line-height: 11.500px;
}
.grp{
	display: flex;
	flex-direction: column;
	justify-content: space-between;
	height: 74px;
	padding-top: 3px;
	background: linear-gradient(#d2d2d2, #d2d2d2) right 4px / 1px 60px no-repeat;
	white-space: nowrap;
}
.grp .row{
	display: flex;
	justify-content: center;
}
.g1{ width: 82px; }
.g1 .row{ justify-content: flex-start; }
.g2{ width: 92px; }
.g3{ width: 63px; }
.g4{ width: 105px; padding-left: 5px; }
.g5{ width: 41px; }
.lab{
	color: #888;
	text-align: center;
	line-height: 13px;
}
.g1 .lab{ text-align: left; }
.bigbtn{
	display: flex;
	flex-direction: column;
	align-items: center;
	text-align: center;
}
.bigbtn p{
	margin-top: 4px;
}
.g1 .bigbtn{
	align-items: flex-start;
	width: 25px;
}
.g1 .bigbtn .dd{
	margin: 4px 0 0 4px;
}
.g2 .row{
	gap: 8px;
}
.dd{
	display: inline-block;
	margin: 0 0 2px 4px;
	border: 2px solid transparent;
	border-top-color: #555;
	border-bottom: 0;
}
.grp li{
	display: flex;
	align-items: center;
	gap: 2px;
	height: 17.500px;
}

/* report */
.main{
	display: flex;
	height: 590px;
}
.report{
	width: 584px;
	padding: 10px 0 0;
	background: linear-gradient(#fbfbf9, #fbfbf9) 0 560px / 577px 1px no-repeat #eaeae8;
}
.page{
	width: 577px;
	height: 541px;
	padding-top: 34px;
	background: #fff;
	overflow: hidden;
	box-shadow: 1px 1px 3px #ccc;
}
.gauges{
	display: flex;
	gap: 29px;
	margin-left: -50px;
}
.gauge p{
	width: 168px;
	height: 12px;
	background: #66625f;
	color: #e8e6e3;
	font-size: 9.200px;
	letter-spacing: -.5px;
	line-height: 12px;
	text-align: center;
	white-space: nowrap;
}
.track, .val{
	fill: none;
	stroke: #e9e8e7;
	stroke-width: 24.500;
}
.val{
	stroke: #1abba6;
}
.red .val{
	stroke: #fd9b93;
}
.num{
	font-family: Roboto, sans-serif;
	font-weight: 300;
	fill: #444;
	letter-spacing: 0;
}
.lim{
	font: 7.500px Roboto, sans-serif;
	fill: #333;
	letter-spacing: 0;
}
.linechart{
	margin-top: 22px;
}
.areachart{
	margin-top: 40px;
}
.linechart text, .areachart text{
	font-size: 8.500px;
	fill: #8a8a8a;
}
.grid{
	fill: none;
	stroke: #efefef;
}
.teal, .trend, .fore, .pink{
	fill: none;
	stroke: #39ad9b;
	stroke-width: 1.600;
	vector-effect: non-scaling-stroke;
}
.trend{
	stroke: #c4bfbd;
	stroke-width: 1.200;
	stroke-dasharray: 4 3;
}
.fore{
	stroke: #555;
	stroke-width: 1.200;
}
.pink{
	stroke: #d98c8a;
}

/* dark panes */
.p-head{
	display: flex;
	align-items: center;
	justify-content: space-between;
	height: 40px;
	padding: 0 10px;
	background: #242424;
	color: #e8e8e8;
	font-size: 11.800px;
	font-weight: 600;
	letter-spacing: -.2px;
}
.p-head svg{
	color: #aaa;
}
.vpane{
	width: 150px;
	background: #444;
	color: #bbb;
}
.dark .icons{
	grid-template-columns: repeat(6, 23.400px);
	grid-auto-rows: 20.200px;
	height: 104px;
	padding: 1px 0 0 3.500px;
	background: #4a4a4a;
}
.dark .icons svg{
	width: 15px;
	height: 15px;
}
.dark .g{
	fill: #c9c9c4;
}
.dark .dots i{
	background: #ccc;
}
.dark .tabs{
	height: 29px;
	gap: 3px;
	padding-left: 10px;
	background: #222;
	color: #c5c5c5;
}
.dark .tabs span{
	width: 34px;
	padding-top: 5px;
}
.dark .tabs .on{
	width: 30px;
	border-bottom: 2px solid #e0ac2f;
}
.scroll{
	display: flex;
	height: 417px;
	overflow: hidden;
}
.inner{
	width: 144px;
}
.inner > p{
	padding-left: 10px;
	height: 26px;
	line-height: 26px;
	letter-spacing: -.35px;
	font-size: 10.300px;
}
.inner .dim{
	color: #979797;
}
.inner .drop{
	height: 24px;
	line-height: 21px;
	padding-left: 12px;
}
.inner .dr2{
	padding-left: 11px;
	line-height: 22px;
	border-top: 1px solid #505050;
	border-bottom: 1px solid #505050;
}
.sub{
	width: 150px;
	height: 30px;
	margin-bottom: 2px;
	padding-left: 12px;
	line-height: 36px;
	background: #242424;
	color: #f2f2f2;
	font-size: 12.500px;
	font-weight: 600;
}
.inner .pl{ height: 27px; }
.inner .dl{ height: 29px; line-height: 29px; }
.card{
	position: relative;
	width: 138px;
	height: 188px;
	margin-left: 6px;
	border-radius: 3px;
	background: #303332;
	color: #e3e3e3;
	font-size: 10.400px;
	letter-spacing: -.4px;
}
.c-head{
	display: flex;
	align-items: center;
	justify-content: space-between;
	height: 25px;
	padding: 0 11px 0 7px;
	white-space: nowrap;
}
.card .c-head{
	letter-spacing: -.3px;
}
.card ul{
	padding: 11px 0 0 9px;
}
.card li{
	display: flex;
	align-items: center;
	height: 15px;
	white-space: nowrap;
}
.card li i{
	width: 8px;
	height: 8px;
	margin-right: 11px;
	background: #fff;
	outline: 1px solid #666;
}
.card li span{
	width: 89px;
}
.cursor{
	position: absolute;
	left: 55px;
	top: 13px;
}
.inner .rl{
	height: 43px;
	line-height: 50px;
}
.yr{
	height: 60px;
}
.yr .c-head{
	height: 20px;
}
.yr p{
	padding-left: 7px;
	line-height: 10px;
}
.bar{
	position: relative;
	width: 5px;
	height: 392px;
	margin-left: 1px;
	background: #6e6d6b;
}
.fields{
	width: 147px;
	margin-left: 1px;
	background: #454545;
	color: #e6e6e6;
}
.fields .p-head{
	padding-right: 6px;
}
.search{
	display: flex;
	align-items: center;
	gap: 7px;
	height: 26px;
	margin: 3px 0 10.500px 4px;
	padding-left: 9px;
	background: #222;
	color: #999;
}
.tables li{
	display: flex;
	align-items: center;
	height: 20.100px;
	padding-left: 11px;
	white-space: nowrap;
	font-size: 10.500px;
	letter-spacing: -.55px;
}
.tables i{
	width: 4px;
	border: 3px solid transparent;
	border-left: 4px solid #999;
	border-right: 0;
}
.tables svg{
	margin: 0 10px 0 6px;
}
.tables .open i{
	border: 0;
	border-left: 5px solid transparent;
	border-bottom: 5px solid #aaa;
	width: 5px;
	margin-left: -1px;
}
.cols{
	margin: 3.500px 1px 0 4px;
}
.cols li{
	display: flex;
	align-items: center;
	height: 18.300px;
	padding-left: 25px;
	background: #65625d;
	border-bottom: 1px solid #474644;
	font-size: 10.400px;
	letter-spacing: -.4px;
}
.cols li > i{
	width: 9px;
	height: 9px;
	background: #fff;
	outline: 1px solid #88857f;
}
.cols em{
	display: flex;
	justify-content: center;
	width: 18px;
	color: #a5a29c;
}
.cols .fx{
	width: 10px;
	height: 9px;
	margin: 0 4px;
	background: #bbb8b2;
	color: #444;
	font: italic bold 8px/9px "Liberation Serif", serif;
}
.last{
	margin-top: 3px;
}
.foot{
	height: 18px;
	background: #333;
	border-bottom: 1px solid #4a4646;
}
.udemy{
	position: absolute;
	right: 3px;
	bottom: 8px;
	display: flex;
	align-items: center;
	gap: 3px;
	color: #aaa;
	font-size: 10px;
	line-height: 13px;
}
```
